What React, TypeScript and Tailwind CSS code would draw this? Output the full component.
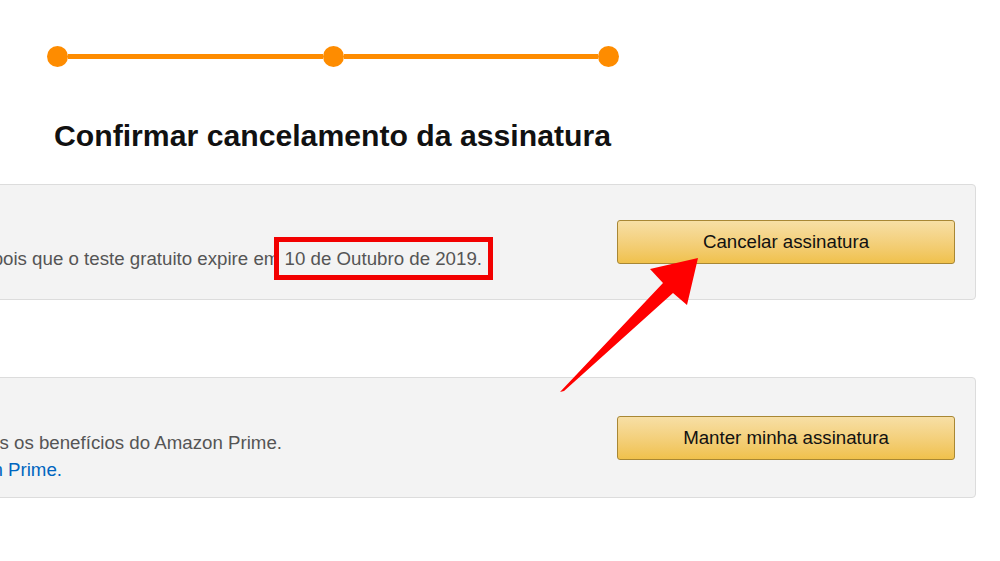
export default function App() {
  return (
    <div
      className="relative w-[1000px] h-[561px] overflow-hidden bg-white"
      style={{ fontFamily: '"Liberation Sans", Arial, sans-serif' }}
    >
      {/* Progress steps */}
      <div className="ml-[47px] mt-[46px] flex w-[572px] items-center">
        <span className="h-[21px] w-[21px] shrink-0 rounded-full bg-[#fe8c00]" />
        <span className="h-[5px] flex-1 bg-[#fe8c00]" />
        <span className="h-[21px] w-[21px] shrink-0 rounded-full bg-[#fe8c00]" />
        <span className="h-[5px] flex-1 bg-[#fe8c00]" />
        <span className="h-[21px] w-[21px] shrink-0 rounded-full bg-[#fe8c00]" />
      </div>

      <h1 className="ml-[54px] mt-[51px] text-[30.2px] font-bold leading-[36px] text-[#111]">
        Confirmar cancelamento da assinatura
      </h1>

      {/* Card 1 */}
      <div className="-ml-[20px] mt-[30px] flex h-[116px] w-[996px] items-start rounded-[4px] border border-[#dcdcdc] bg-[#f3f3f3]">
        <div className="mt-[62px] flex w-[501px] justify-end whitespace-nowrap text-[18.7px] leading-[24px] text-[#555]">
          <span>
            Sua assinatura será encerrada depois que o teste gratuito expire em{" "}
            <span className="relative">
              10 de Outubro de 2019.
              <span className="absolute -bottom-[11px] -left-[11px] -right-[11px] -top-[11px] border-[5px] border-[#f20000]" />
            </span>
          </span>
        </div>
        <button className="ml-[135px] mt-[35px] h-[44px] w-[338px] rounded-[3px] border border-[#a88734] bg-gradient-to-b from-[#f7dfa5] to-[#f0c14b] text-[18.7px] text-[#111]">
          Cancelar assinatura
        </button>
      </div>

      {/* Card 2 */}
      <div className="-ml-[20px] mt-[77px] flex h-[121px] w-[996px] items-start rounded-[4px] border border-[#dcdcdc] bg-[#f3f3f3]">
        <div className="mt-[51px] flex w-[301px] flex-col whitespace-nowrap text-[18.7px] leading-[27px]">
          <div className="flex justify-end text-[#555]">
            <span>Continue aproveitando todos os benefícios do Amazon Prime.</span>
          </div>
          <div className="flex w-[81px] justify-end text-[#0066c0]">
            <span>Saiba mais sobre o Amazon Prime.</span>
          </div>
        </div>
        <button className="ml-[335px] mt-[38px] h-[44px] w-[338px] rounded-[3px] border border-[#a88734] bg-gradient-to-b from-[#f7dfa5] to-[#f0c14b] text-[18.7px] text-[#111]">
          Manter minha assinatura
        </button>
      </div>

      {/* Red arrow overlay */}
      <svg
        className="pointer-events-none absolute left-0 top-0"
        width="1000"
        height="561"
        viewBox="0 0 1000 561"
      >
        <polygon
          points="560,392 564,391 673,293 687,305 698,258 650,269 663,283"
          fill="#ff0000"
        />
      </svg>
    </div>
  );
}
